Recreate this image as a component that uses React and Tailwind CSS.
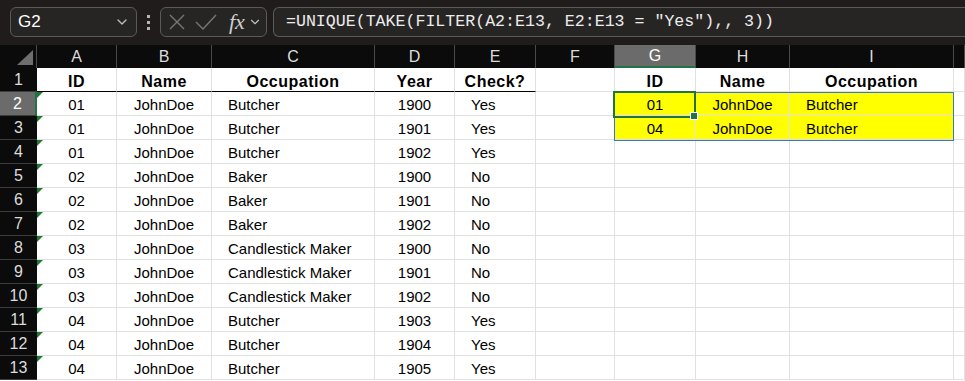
import React from 'react';
import { ChevronDown } from 'lucide-react';

const data = [
  ['01', 'JohnDoe', 'Butcher', '1900', 'Yes'],
  ['01', 'JohnDoe', 'Butcher', '1901', 'Yes'],
  ['01', 'JohnDoe', 'Butcher', '1902', 'Yes'],
  ['02', 'JohnDoe', 'Baker', '1900', 'No'],
  ['02', 'JohnDoe', 'Baker', '1901', 'No'],
  ['02', 'JohnDoe', 'Baker', '1902', 'No'],
  ['03', 'JohnDoe', 'Candlestick Maker', '1900', 'No'],
  ['03', 'JohnDoe', 'Candlestick Maker', '1901', 'No'],
  ['03', 'JohnDoe', 'Candlestick Maker', '1902', 'No'],
  ['04', 'JohnDoe', 'Butcher', '1903', 'Yes'],
  ['04', 'JohnDoe', 'Butcher', '1904', 'Yes'],
  ['04', 'JohnDoe', 'Butcher', '1905', 'Yes'],
];

const spill = [
  ['01', 'JohnDoe', 'Butcher'],
  ['04', 'JohnDoe', 'Butcher'],
];

const headers = ['ID', 'Name', 'Occupation', 'Year', 'Check?', '', 'ID', 'Name', 'Occupation', ''];
const letters = ['A', 'B', 'C', 'D', 'E', 'F', 'G', 'H', 'I', ''];
// left-aligned (indented) columns: C, E, I
const leftCols = [2, 4, 8];

const gridCols = 'grid grid-cols-[37px_80px_95px_163px_80px_81px_79px_81px_94px_164px_1fr]';

const Triangle = () => (
  <svg className="absolute left-0 top-0" width="6" height="6" viewBox="0 0 6 6">
    <polygon points="0,0 6,0 0,6" fill="#1f7a35" />
  </svg>
);

const Cell = ({ col, children, bold, fill, thick, flag }) => {
  const align = leftCols.includes(col) && !bold ? 'justify-start pl-4' : 'justify-center';
  return (
    <div
      className={`relative flex h-6 items-center border-r border-b border-r-[#e1e1e1] ${
        thick ? 'border-b-black' : 'border-b-[#e1e1e1]'
      } ${fill ? 'bg-[#ffff00]' : 'bg-white'} ${align} ${
        bold ? 'pt-[5px] font-bold tracking-[0.5px]' : 'pt-[3px]'
      } text-[15px] text-black`}
    >
      {flag && <Triangle />}
      <span className={bold ? 'text-[16px]' : ''}>{children}</span>
    </div>
  );
};

const RowHeader = ({ n, active }) => (
  <div
    className={`flex h-6 items-center justify-center border-b border-b-[#3c3c3c] pt-[1px] text-[16px] ${
      active ? 'border-r-2 border-r-[#217346] bg-[#6b6b6b] text-white' : 'bg-[#0b0b0b] text-[#dcdcdc]'
    }`}
  >
    {n}
  </div>
);

export default function App() {
  return (
    <div className="h-[381px] w-[965px] overflow-hidden bg-white font-['Liberation_Sans',Arial,sans-serif]">
      {/* formula bar */}
      <div className="flex h-[45px] items-start bg-[#1f1c1b] pt-[7px]">
        <div className="ml-[10px] flex h-[30px] w-[127px] items-center justify-between rounded-md border border-[#5c5a59] bg-[#272524] pl-[7px] pr-[6px]">
          <span className="text-[17px] text-white">G2</span>
          <ChevronDown className="h-4 w-4 text-[#bdbdbd]" strokeWidth={2} />
        </div>
        <div className="ml-[10px] flex h-[30px] flex-col items-center justify-center gap-[3px]">
          <span className="h-[3px] w-[3px] bg-[#b5b5b5]" />
          <span className="h-[3px] w-[3px] bg-[#b5b5b5]" />
          <span className="h-[3px] w-[3px] bg-[#b5b5b5]" />
        </div>
        <div className="ml-[10px] flex h-[30px] w-[107px] items-center rounded-md border border-[#5c5a59] bg-[#272524] pl-[7px]">
          <svg width="18" height="18" viewBox="0 0 18 18" className="text-[#777]">
            <path d="M2 2 L16 16 M16 2 L2 16" stroke="currentColor" strokeWidth="1.4" />
          </svg>
          <svg width="22" height="18" viewBox="0 0 22 18" className="ml-[9px] text-[#777]">
            <path d="M1 9 L8 16 L21 2" stroke="currentColor" strokeWidth="1.4" fill="none" />
          </svg>
          <span className="ml-[12px] font-['Liberation_Serif',serif] text-[22px] italic leading-none text-[#cfcfcf]">
            fx
          </span>
          <ChevronDown className="ml-[3px] h-[14px] w-[14px] text-[#bdbdbd]" strokeWidth={2} />
        </div>
        <div className="ml-[6px] flex h-[30px] flex-1 items-center rounded-l-md border border-r-0 border-[#5c5a59] bg-[#272524] pl-3">
          <span className="whitespace-pre font-['Liberation_Mono',monospace] text-[16.6px] text-[#ececec]">
            =UNIQUE(TAKE(FILTER(A2:E13, E2:E13 = "Yes"),, 3))
          </span>
        </div>
      </div>

      {/* sheet */}
      <div className="relative">
        <div className={gridCols}>
          {/* column header row */}
          <div className="relative h-[23px] border-r border-r-[#4a4a4a] bg-[#0b0b0b]">
            <svg className="absolute bottom-[3px] right-[3px]" width="16" height="15" viewBox="0 0 16 15">
              <polygon points="16,0 16,15 0,15" fill="#6e6e6e" />
            </svg>
          </div>
          {letters.map((l, i) => (
            <div
              key={i}
              className={`flex h-[23px] items-center justify-center border-r border-r-[#4a4a4a] text-[16px] ${
                l === 'G' ? 'border-b-2 border-b-[#217346] bg-[#6b6b6b] text-white' : 'bg-[#0b0b0b] text-[#dcdcdc]'
              }`}
            >
              {l}
            </div>
          ))}

          {/* row 1 */}
          <RowHeader n={1} />
          {headers.map((h, i) => (
            <Cell key={i} col={i} bold thick={i < 5}>
              {h}
            </Cell>
          ))}

          {/* rows 2..13 */}
          {data.map((r, ri) => {
            const s = spill[ri];
            const cells = [...r, '', s ? s[0] : '', s ? s[1] : '', s ? s[2] : '', ''];
            return (
              <React.Fragment key={ri}>
                <RowHeader n={ri + 2} active={ri === 0} />
                {cells.map((c, ci) => (
                  <Cell key={ci} col={ci} fill={s && ci >= 6 && ci <= 8} flag={ci === 0}>
                    {c}
                  </Cell>
                ))}
              </React.Fragment>
            );
          })}
        </div>

        {/* spill range outline */}
        <div className="pointer-events-none absolute left-[614px] top-[47px] h-[49px] w-[340px] border border-[#3a72d6]" />
        {/* active cell */}
        <div className="pointer-events-none absolute left-[613px] top-[46px] h-[27px] w-[83px] border-2 border-[#217346]" />
        <div className="pointer-events-none absolute left-[691px] top-[68px] h-[6px] w-[6px] bg-[#217346] outline outline-1 outline-white" />
      </div>
    </div>
  );
}
